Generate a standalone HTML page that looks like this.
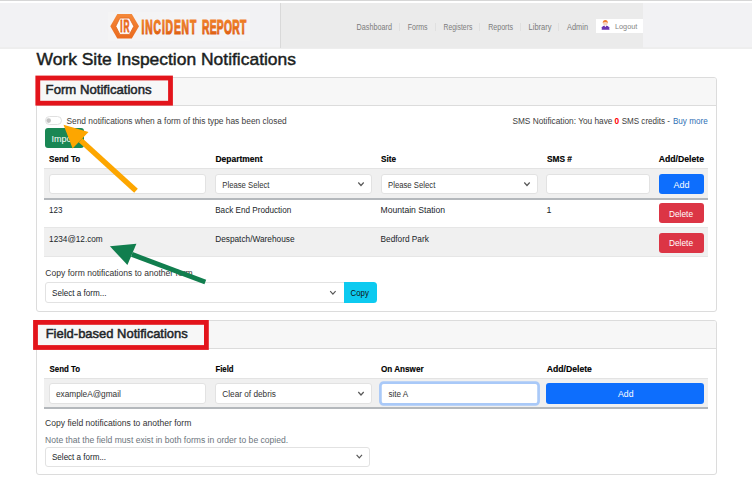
<!DOCTYPE html>
<html><head><meta charset="utf-8"><title>Work Site Inspection Notifications</title>
<style>
html,body{margin:0;padding:0;background:#fff;width:752px;height:483px;overflow:hidden;position:relative;font-family:"Liberation Sans", sans-serif;}
.b{position:absolute;}
svg{position:absolute;left:0;top:0;}
text{font-family:"Liberation Sans", sans-serif;}
</style></head><body>
<div class="b" style="left:0px;top:0px;width:752px;height:1.3px;background:#d6d6d6;"></div><div class="b" style="left:0px;top:3px;width:752px;height:45px;background:#f2f2f4;"></div><div class="b" style="left:0px;top:47px;width:752px;height:2px;background:#eeeeee;"></div><div class="b" style="left:280px;top:3px;width:1px;height:45px;background:#d9d9d9;"></div><div class="b" style="left:281px;top:3px;width:362px;height:45px;background:#ebebeb;"></div><div class="b" style="left:108px;top:12px;width:142px;height:29px;background:#f4f4f5;"></div><div class="b" style="left:596px;top:19px;width:47px;height:14px;background:#ffffff;"></div><div class="b" style="left:399px;top:23px;width:1px;height:8px;background:#e0e0e0;"></div><div class="b" style="left:435px;top:23px;width:1px;height:8px;background:#e0e0e0;"></div><div class="b" style="left:479.4px;top:23px;width:1.0px;height:8px;background:#e0e0e0;"></div><div class="b" style="left:520.4px;top:23px;width:1.0px;height:8px;background:#e0e0e0;"></div><div class="b" style="left:558px;top:23px;width:1px;height:8px;background:#e0e0e0;"></div><div class="b" style="left:36px;top:77px;width:681px;height:235px;background:#ffffff;border:1px solid #dcdcdc;box-sizing:border-box;border-radius:3px;"></div><div class="b" style="left:37px;top:78px;width:679px;height:27px;background:#f7f7f7;border-radius:2px 2px 0 0;"></div><div class="b" style="left:37px;top:105px;width:679px;height:1px;background:#dcdcdc;"></div><div class="b" style="left:44.7px;top:116.3px;width:17.0px;height:8.5px;background:#ffffff;border:0.8px solid #e0e0e0;box-sizing:border-box;border-radius:4.5px;"></div><div class="b" style="left:44.9px;top:128px;width:38.9px;height:19.80000000000001px;background:#198754;border-radius:3px;"></div><div class="b" style="left:44px;top:168px;width:664px;height:30px;background:#f0f0f0;"></div><div class="b" style="left:44px;top:168px;width:664px;height:1px;background:#e3e3e3;"></div><div class="b" style="left:44px;top:198px;width:664px;height:2px;background:#b4b8bc;"></div><div class="b" style="left:49px;top:174px;width:157px;height:20px;background:#ffffff;border:0.8px solid #e2e2e2;box-sizing:border-box;border-radius:3px;"></div><div class="b" style="left:215px;top:174px;width:157px;height:20px;background:#ffffff;border:0.8px solid #e2e2e2;box-sizing:border-box;border-radius:3px;"></div><div class="b" style="left:381px;top:174px;width:157px;height:20px;background:#ffffff;border:0.8px solid #e2e2e2;box-sizing:border-box;border-radius:3px;"></div><div class="b" style="left:546px;top:174px;width:104px;height:20px;background:#ffffff;border:0.8px solid #e2e2e2;box-sizing:border-box;border-radius:3px;"></div><div class="b" style="left:658.5px;top:174px;width:45.5px;height:20px;background:#0d6efd;border-radius:3px;"></div><div class="b" style="left:44px;top:227px;width:664px;height:30px;background:#f0f0f0;"></div><div class="b" style="left:44px;top:227px;width:664px;height:1px;background:#e6e6e6;"></div><div class="b" style="left:44px;top:256px;width:664px;height:1px;background:#e6e6e6;"></div><div class="b" style="left:658.5px;top:203px;width:45.5px;height:20px;background:#dc3545;border-radius:3px;"></div><div class="b" style="left:658.5px;top:232.5px;width:45.5px;height:20.0px;background:#dc3545;border-radius:3px;"></div><div class="b" style="left:45px;top:282px;width:300px;height:21px;background:#ffffff;border:0.8px solid #e2e2e2;box-sizing:border-box;border-radius:3px 0 0 3px;"></div><div class="b" style="left:344px;top:282px;width:32.60000000000002px;height:21px;background:#0dcaf0;border-radius:0 3.5px 3.5px 0;"></div><div class="b" style="left:36px;top:320px;width:681px;height:155px;background:#ffffff;border:1px solid #dcdcdc;box-sizing:border-box;border-radius:3px;"></div><div class="b" style="left:37px;top:321px;width:679px;height:27px;background:#f7f7f7;border-radius:2px 2px 0 0;"></div><div class="b" style="left:37px;top:348px;width:679px;height:1px;background:#dcdcdc;"></div><div class="b" style="left:44px;top:378px;width:664px;height:29px;background:#f0f0f0;"></div><div class="b" style="left:44px;top:378px;width:664px;height:1px;background:#e3e3e3;"></div><div class="b" style="left:44px;top:407px;width:664px;height:2px;background:#b4b8bc;"></div><div class="b" style="left:49px;top:383px;width:157px;height:21px;background:#ffffff;border:0.8px solid #e2e2e2;box-sizing:border-box;border-radius:3px;"></div><div class="b" style="left:215px;top:383px;width:157px;height:21px;background:#ffffff;border:0.8px solid #e2e2e2;box-sizing:border-box;border-radius:3px;"></div><div class="b" style="left:546px;top:383px;width:158px;height:20.600000000000023px;background:#0d6efd;border-radius:3px;"></div><div class="b" style="left:45px;top:446.5px;width:325px;height:20.0px;background:#ffffff;border:0.8px solid #e2e2e2;box-sizing:border-box;border-radius:3px;"></div>
<svg width="752" height="483" viewBox="0 0 752 483">
<text x="356.6" y="29.5" font-size="8.6" fill="#7c7c7c" font-weight="normal" textLength="35.4" lengthAdjust="spacingAndGlyphs">Dashboard</text><text x="407.7" y="29.5" font-size="8.6" fill="#7c7c7c" font-weight="normal" textLength="19.9" lengthAdjust="spacingAndGlyphs">Forms</text><text x="443.6" y="29.5" font-size="8.6" fill="#7c7c7c" font-weight="normal" textLength="28.7" lengthAdjust="spacingAndGlyphs">Registers</text><text x="488.2" y="29.5" font-size="8.6" fill="#7c7c7c" font-weight="normal" textLength="24.8" lengthAdjust="spacingAndGlyphs">Reports</text><text x="528.6" y="29.5" font-size="8.6" fill="#7c7c7c" font-weight="normal" textLength="22.9" lengthAdjust="spacingAndGlyphs">Library</text><text x="567" y="29.5" font-size="8.6" fill="#7c7c7c" font-weight="normal" textLength="21.0" lengthAdjust="spacingAndGlyphs">Admin</text><text x="615" y="28.7" font-size="8.0" fill="#858585" font-weight="normal" textLength="22.3" lengthAdjust="spacingAndGlyphs">Logout</text><text x="36.5" y="65.4" font-size="17" fill="#1b1e21" font-weight="normal" textLength="259.5" lengthAdjust="spacingAndGlyphs" stroke="#1b1e21" stroke-width="0.45">Work Site Inspection Notifications</text><rect x="37.8" y="78.0" width="132.7" height="25.2" fill="none" stroke="#e3141b" stroke-width="4.8"/><text x="45.6" y="94.4" font-size="13.3" fill="#212529" font-weight="normal" textLength="106.0" lengthAdjust="spacingAndGlyphs" stroke="#212529" stroke-width="0.5">Form Notifications</text><circle cx="48.7" cy="120.6" r="2.3" fill="#c2c2c2"/><text x="66.5" y="123.6" font-size="8.9" fill="#3d3d3d" font-weight="normal" textLength="220.2" lengthAdjust="spacingAndGlyphs">Send notifications when a form of this type has been closed</text><text x="512.4" y="123.6" font-size="8.9" fill="#3d3d3d" font-weight="normal" textLength="100.1" lengthAdjust="spacingAndGlyphs">SMS Notification: You have</text><text x="614.4" y="123.6" font-size="8.9" fill="#ff0000" font-weight="bold" textLength="4.6" lengthAdjust="spacingAndGlyphs">0</text><text x="621.7" y="123.6" font-size="8.9" fill="#3d3d3d" font-weight="normal" textLength="48.3" lengthAdjust="spacingAndGlyphs">SMS credits -</text><text x="672.9" y="123.6" font-size="8.9" fill="#2f6fb5" font-weight="normal" textLength="34.8" lengthAdjust="spacingAndGlyphs">Buy more</text><text x="51.5" y="141.7" font-size="8.9" fill="#ffffff" font-weight="normal" textLength="25.5" lengthAdjust="spacingAndGlyphs">Import</text><text x="49.1" y="162.3" font-size="9.0" fill="#000" font-weight="bold" textLength="31.2" lengthAdjust="spacingAndGlyphs" stroke="#000" stroke-width="0.15">Send To</text><text x="215.5" y="162.3" font-size="9.0" fill="#000" font-weight="bold" textLength="47.0" lengthAdjust="spacingAndGlyphs" stroke="#000" stroke-width="0.15">Department</text><text x="381" y="162.3" font-size="9.0" fill="#000" font-weight="bold" textLength="15.0" lengthAdjust="spacingAndGlyphs" stroke="#000" stroke-width="0.15">Site</text><text x="547" y="162.3" font-size="9.0" fill="#000" font-weight="bold" textLength="25.0" lengthAdjust="spacingAndGlyphs" stroke="#000" stroke-width="0.15">SMS #</text><text x="658.7" y="162.3" font-size="9.0" fill="#000" font-weight="bold" textLength="45.3" lengthAdjust="spacingAndGlyphs" stroke="#000" stroke-width="0.15">Add/Delete</text><text x="222.3" y="187.5" font-size="8.9" fill="#333" font-weight="normal" textLength="47.2" lengthAdjust="spacingAndGlyphs">Please Select</text><path d="M358.3 182.5 L361 185.5 L363.7 182.5" fill="none" stroke="#585858" stroke-width="1.2"/><text x="388" y="187.5" font-size="8.9" fill="#333" font-weight="normal" textLength="47.3" lengthAdjust="spacingAndGlyphs">Please Select</text><path d="M524.3 182.5 L527 185.5 L529.7 182.5" fill="none" stroke="#585858" stroke-width="1.2"/><text x="673.6" y="187.5" font-size="8.9" fill="#ffffff" font-weight="normal" textLength="16.0" lengthAdjust="spacingAndGlyphs">Add</text><text x="49.1" y="213" font-size="8.9" fill="#212529" font-weight="normal" textLength="13.4" lengthAdjust="spacingAndGlyphs">123</text><text x="215.2" y="213" font-size="8.9" fill="#212529" font-weight="normal" textLength="76.0" lengthAdjust="spacingAndGlyphs">Back End Production</text><text x="380.5" y="213" font-size="8.9" fill="#212529" font-weight="normal" textLength="64.6" lengthAdjust="spacingAndGlyphs">Mountain Station</text><text x="546.6" y="213" font-size="8.9" fill="#212529">1</text><text x="669" y="216.5" font-size="8.9" fill="#ffffff" font-weight="normal" textLength="24.0" lengthAdjust="spacingAndGlyphs">Delete</text><text x="49.1" y="241.7" font-size="8.9" fill="#212529" font-weight="normal" textLength="53.6" lengthAdjust="spacingAndGlyphs">1234@12.com</text><text x="215.2" y="241.7" font-size="8.9" fill="#212529" font-weight="normal" textLength="79.3" lengthAdjust="spacingAndGlyphs">Despatch/Warehouse</text><text x="380.5" y="241.7" font-size="8.9" fill="#212529" font-weight="normal" textLength="48.4" lengthAdjust="spacingAndGlyphs">Bedford Park</text><text x="669" y="246" font-size="8.9" fill="#ffffff" font-weight="normal" textLength="24.0" lengthAdjust="spacingAndGlyphs">Delete</text><text x="45.3" y="275.8" font-size="8.9" fill="#333" font-weight="normal" textLength="147.4" lengthAdjust="spacingAndGlyphs">Copy form notifications to another form</text><text x="52" y="296.2" font-size="8.9" fill="#212529" font-weight="normal" textLength="54.6" lengthAdjust="spacingAndGlyphs">Select a form...</text><path d="M330.2 291.1 L332.9 294.1 L335.59999999999997 291.1" fill="none" stroke="#585858" stroke-width="1.2"/><text x="350.6" y="296" font-size="8.9" fill="#111" font-weight="normal" textLength="18.2" lengthAdjust="spacingAndGlyphs">Copy</text><rect x="35.5" y="322.4" width="170.9" height="25.1" fill="none" stroke="#e3141b" stroke-width="4.8"/><text x="45.7" y="338.0" font-size="13.3" fill="#212529" font-weight="normal" textLength="142.1" lengthAdjust="spacingAndGlyphs" stroke="#212529" stroke-width="0.5">Field-based Notifications</text><text x="49.5" y="371.8" font-size="9.0" fill="#000" font-weight="bold" textLength="30.5" lengthAdjust="spacingAndGlyphs" stroke="#000" stroke-width="0.15">Send To</text><text x="215.4" y="371.8" font-size="9.0" fill="#000" font-weight="bold" textLength="18.2" lengthAdjust="spacingAndGlyphs" stroke="#000" stroke-width="0.15">Field</text><text x="381" y="371.8" font-size="9.0" fill="#000" font-weight="bold" textLength="42.6" lengthAdjust="spacingAndGlyphs" stroke="#000" stroke-width="0.15">On Answer</text><text x="546.8" y="371.8" font-size="9.0" fill="#000" font-weight="bold" textLength="45.1" lengthAdjust="spacingAndGlyphs" stroke="#000" stroke-width="0.15">Add/Delete</text><text x="55.9" y="396.6" font-size="8.9" fill="#333" font-weight="normal" textLength="65.0" lengthAdjust="spacingAndGlyphs">exampleA@gmail</text><text x="222.3" y="396.6" font-size="8.9" fill="#333" font-weight="normal" textLength="53.6" lengthAdjust="spacingAndGlyphs">Clear of debris</text><path d="M358.3 392.0 L361 395.0 L363.7 392.0" fill="none" stroke="#585858" stroke-width="1.2"/><rect x="380.4" y="382.6" width="158.2" height="21.8" rx="3.2" fill="#ffffff" stroke="#a9c9f8" stroke-width="2.7"/><text x="388.4" y="396.6" font-size="8.9" fill="#333" font-weight="normal" textLength="19.8" lengthAdjust="spacingAndGlyphs">site A</text><text x="618" y="396.8" font-size="8.9" fill="#ffffff" font-weight="normal" textLength="15.5" lengthAdjust="spacingAndGlyphs">Add</text><text x="45.1" y="426.4" font-size="8.9" fill="#333" font-weight="normal" textLength="146.2" lengthAdjust="spacingAndGlyphs">Copy field notifications to another form</text><text x="45.1" y="443.1" font-size="8.9" fill="#6c757d" font-weight="normal" textLength="243.1" lengthAdjust="spacingAndGlyphs">Note that the field must exist in both forms in order to be copied.</text><text x="52" y="459.5" font-size="8.9" fill="#212529" font-weight="normal" textLength="54.1" lengthAdjust="spacingAndGlyphs">Select a form...</text><path d="M356.6 454.8 L359.3 457.8 L362.0 454.8" fill="none" stroke="#585858" stroke-width="1.2"/><line x1="80.55" y1="140.25" x2="136" y2="190.7" stroke="#fda600" stroke-width="5.4" stroke-linecap="butt"/><polygon points="63.5,124.7 88.5,132 72.6,148.5" fill="#fda600"/><line x1="131.9" y1="254.4" x2="205.3" y2="282" stroke="#117e4e" stroke-width="4.9" stroke-linecap="butt"/><polygon points="109.9,246.2 136.4,243.8 127.4,265" fill="#117e4e"/>
<g>
<polygon points="110.3,26.3 117.3,14 131.8,14 139,26.3 131.8,38.5 117.3,38.5" fill="url(#og2)"/>
<polygon points="115.8,26.3 119.9,18.1 129.4,18.1 133.8,26.3 129.4,34.4 119.9,34.4" fill="#ffffff"/>
<polygon points="115.8,26.3 119.9,18.1 129.4,18.1 133.8,26.3 129.4,34.4 119.9,34.4" fill="none" stroke="#e0661c" stroke-width="0.8"/>
<text transform="translate(120.2,31.7) scale(0.5,1)" x="0" y="0" font-size="16.6" font-weight="bold" fill="#e8681c" stroke="#e8681c" stroke-width="0.9" textLength="18.4" lengthAdjust="spacing">IR</text>
</g>
<defs><linearGradient id="og" x1="0" y1="0" x2="0" y2="1"><stop offset="0" stop-color="#f58a2c"/><stop offset="1" stop-color="#dc5a0e"/></linearGradient><linearGradient id="og2" x1="0" y1="0" x2="0" y2="1"><stop offset="0" stop-color="#f5893a"/><stop offset="1" stop-color="#ea6a1e"/></linearGradient></defs><text transform="translate(141.6,33.7) scale(0.5,1)" x="0" y="0" font-size="20.6" font-weight="bold" fill="url(#og)" stroke="url(#og)" stroke-width="1.15" textLength="109.2" lengthAdjust="spacing">INCIDENT</text><text transform="translate(201.9,33.7) scale(0.5,1)" x="0" y="0" font-size="20.6" font-weight="bold" fill="url(#og)" stroke="url(#og)" stroke-width="1.15" textLength="89.0" lengthAdjust="spacing">REPORT</text><path d="M601.7 29.7 L601.9 27.2 Q602.6 25.6 605.3 25.5 Q608.3 25.6 609.1 27.2 L609.5 29.7 Z" fill="#6a35b0"/><circle cx="605.3" cy="23.4" r="2.3" fill="#f6d2bc"/><path d="M602.7 23.2 Q602.8 20.1 605.3 20 Q607.8 20.1 607.9 23.2 Q606.9 21.9 605.3 22 Q603.7 21.9 602.7 23.2 Z" fill="#f07d2e"/><rect x="604.8" y="25.2" width="1.2" height="1.6" fill="#ffffff"/>
</svg>
</body></html>
